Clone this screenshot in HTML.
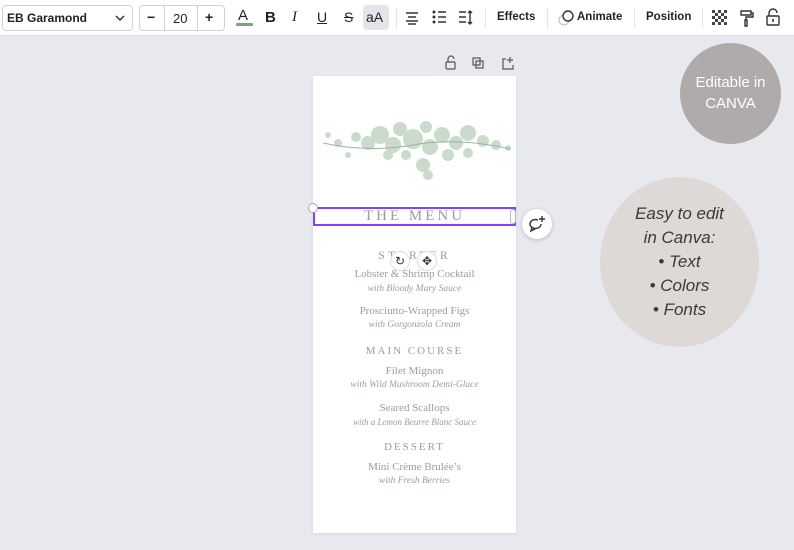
<!DOCTYPE html>
<html><head><meta charset="utf-8"><style>
*{margin:0;padding:0;box-sizing:border-box}
body{width:794px;height:550px;background:#e8e9ee;font-family:"Liberation Sans",sans-serif;position:relative;overflow:hidden}
.tb{position:absolute;left:0;top:0;width:794px;height:36px;background:#fff;border-bottom:1px solid #dcdde2}
.abs{position:absolute}
.box{position:absolute;border:1px solid #cfd1d6;border-radius:4px;background:#fff}
.t{position:absolute;font-size:12px;color:#1f2328;font-weight:bold;top:11px}
.sep{position:absolute;top:8px;width:1px;height:20px;background:#e3e4e8}
.serif{font-family:"Liberation Serif",serif;color:#96a294;text-align:center;position:absolute;left:313px;width:203px}
</style></head><body>
<div class="tb">
 <div class="box" style="left:2px;top:5px;width:131px;height:26px"></div>
 <div class="t" style="left:7px;font-weight:bold;font-size:12px;color:#222">EB Garamond</div>
 <svg class="abs" style="left:115px;top:14px" width="10" height="8"><path d="M1 2l4 4 4-4" stroke="#333" stroke-width="1.5" fill="none"/></svg>
 <div class="box" style="left:139px;top:5px;width:86px;height:26px"></div>
 <div class="abs" style="left:164px;top:5px;width:1px;height:26px;background:#cfd1d6"></div>
 <div class="abs" style="left:197px;top:5px;width:1px;height:26px;background:#cfd1d6"></div>
 <div class="t" style="left:147px;top:9px;font-size:14px">−</div>
 <div class="t" style="left:173px;font-weight:normal;font-size:13px">20</div>
 <div class="t" style="left:205px;top:9px;font-size:14px">+</div>
 <div class="t" style="left:238px;top:7px;font-size:15px;font-weight:normal">A</div>
 <div class="abs" style="left:236px;top:23px;width:17px;height:3px;background:#7aa57c;border-radius:1px"></div>
 <div class="t" style="left:265px;top:9px;font-size:15px">B</div>
 <div class="t" style="left:292px;top:9px;font-size:15px;font-style:italic;font-weight:normal;font-family:'Liberation Serif',serif">I</div>
 <div class="t" style="left:317px;top:9px;font-size:14px;font-weight:normal;text-decoration:underline">U</div>
 <div class="t" style="left:344px;top:9px;font-size:14px;font-weight:normal;text-decoration:line-through">S</div>
 <div class="abs" style="left:363px;top:5px;width:26px;height:25px;background:#e3e5e9;border-radius:4px"></div>
 <div class="t" style="left:366px;top:9px;font-size:14px;font-weight:normal">aA</div>
 <div class="sep" style="left:396px"></div>
 <svg class="abs" style="left:405px;top:11px" width="14" height="14"><path d="M1 2h12M3 6h8M1 10h12M3 13h8" stroke="#333" stroke-width="1.4"/></svg>
 <svg class="abs" style="left:432px;top:10px" width="14" height="14"><g fill="#333"><circle cx="2" cy="2" r="1.5"/><circle cx="2" cy="7" r="1.5"/><circle cx="2" cy="12" r="1.5"/></g><path d="M6 2h8M6 7h8M6 12h8" stroke="#333" stroke-width="1.4"/></svg>
 <svg class="abs" style="left:458px;top:10px" width="16" height="15"><path d="M1 2h7M1 7h7M1 12h7M12 1v13M10 3l2-2 2 2M10 12l2 2 2-2" stroke="#333" stroke-width="1.4" fill="none"/></svg>
 <div class="sep" style="left:485px"></div>
 <div class="t" style="left:497px;font-size:11.5px">Effects</div>
 <div class="sep" style="left:547px"></div>
 <svg class="abs" style="left:557px;top:10px" width="18" height="16"><circle cx="7" cy="10" r="5" fill="none" stroke="#bbb"/><circle cx="11" cy="6" r="5" fill="#fff" stroke="#333" stroke-width="1.4"/></svg>
 <div class="t" style="left:577px;font-size:11.5px">Animate</div>
 <div class="sep" style="left:634px"></div>
 <div class="t" style="left:646px;font-size:11.5px">Position</div>
 <div class="sep" style="left:702px"></div>
 <svg class="abs" style="left:712px;top:10px" width="15" height="15"><g fill="#444"><rect x="0" y="0" width="3" height="3"/><rect x="6" y="0" width="3" height="3"/><rect x="12" y="0" width="3" height="3"/><rect x="3" y="3" width="3" height="3"/><rect x="9" y="3" width="3" height="3"/><rect x="0" y="6" width="3" height="3"/><rect x="6" y="6" width="3" height="3"/><rect x="12" y="6" width="3" height="3"/><rect x="3" y="9" width="3" height="3"/><rect x="9" y="9" width="3" height="3"/><rect x="0" y="12" width="3" height="3"/><rect x="6" y="12" width="3" height="3"/><rect x="12" y="12" width="3" height="3"/></g></svg>
 <svg class="abs" style="left:739px;top:9px" width="15" height="18"><path d="M2 2h10v4H2zM12 4h2v4H7v3M6 11h2v6H6z" stroke="#333" stroke-width="1.4" fill="none"/></svg>
 <svg class="abs" style="left:766px;top:8px" width="14" height="18"><path d="M3 8V5a4 4 0 0 1 8 0" stroke="#333" stroke-width="1.4" fill="none"/><rect x="1" y="8" width="12" height="9" rx="1" stroke="#333" stroke-width="1.4" fill="none"/><path d="M7 11v3" stroke="#333" stroke-width="1.6"/></svg>
</div>

<svg class="abs" style="left:444px;top:55px" width="75" height="16"><g stroke="#555" stroke-width="1.2" fill="none"><path d="M4 7V4a3 3 0 0 1 6 0"/><rect x="2" y="7" width="9" height="7" rx="1"/><rect x="29" y="3" width="7" height="7"/><rect x="32" y="6" width="7" height="7"/><path d="M62 4h-3v10h10v-4M66 2v6M63 5h6"/></g></svg>

<div class="abs" style="left:313px;top:76px;width:203px;height:457px;background:#fff;box-shadow:0 1px 3px rgba(0,0,0,.08)"></div>
<svg class="abs" style="left:318px;top:105px" width="196" height="80">
<g fill="#b5ccb7" opacity=".7">
<circle cx="38" cy="32" r="5"/><circle cx="50" cy="38" r="7"/><circle cx="62" cy="30" r="9"/><circle cx="75" cy="40" r="8"/>
<circle cx="82" cy="24" r="7"/><circle cx="95" cy="34" r="10"/><circle cx="108" cy="22" r="6"/><circle cx="112" cy="42" r="8"/>
<circle cx="124" cy="30" r="8"/><circle cx="138" cy="38" r="7"/><circle cx="150" cy="28" r="8"/><circle cx="165" cy="36" r="6"/>
<circle cx="178" cy="40" r="5"/><circle cx="190" cy="43" r="3"/><circle cx="10" cy="30" r="3"/><circle cx="20" cy="38" r="4"/>
<circle cx="70" cy="50" r="5"/><circle cx="88" cy="50" r="5"/><circle cx="130" cy="50" r="6"/><circle cx="150" cy="48" r="5"/>
<circle cx="105" cy="60" r="7"/><circle cx="110" cy="70" r="5"/><circle cx="30" cy="50" r="3"/>
</g>
<path d="M5 38 Q50 48 95 40 T192 44" stroke="#9ab59d" fill="none"/>
</svg>

<div class="abs" style="left:313px;top:207px;width:203px;height:19px;border:2px solid #8b3dff"></div>
<div class="abs" style="left:308px;top:203px;width:10px;height:10px;border-radius:50%;background:#fff;border:1px solid #aaa"></div>
<div class="abs" style="left:510px;top:209px;width:6px;height:15px;background:#fff;border:1px solid #bbb;border-radius:3px"></div>
<div class="serif" style="top:208px;font-size:15px;letter-spacing:3px">THE MENU</div>
<div class="abs" style="left:522px;top:209px;width:30px;height:30px;border-radius:50%;background:#fff;box-shadow:0 1px 4px rgba(0,0,0,.2)"></div>
<svg class="abs" style="left:528px;top:215px" width="18" height="18"><path d="M13 9a5.5 4.5 0 1 1-3-4M4 12l-1 4 4-2" stroke="#333" stroke-width="1.4" fill="none"/><path d="M14 1v6M11 4h6" stroke="#333" stroke-width="1.4"/></svg>

<div class="serif" style="top:248px;font-size:12px;letter-spacing:3px">STARTER</div>
<div class="abs" style="left:390px;top:251px;width:20px;height:20px;border-radius:50%;background:#fff;border:1px solid #ddd;font-size:12px;text-align:center;line-height:18px;color:#333">↻</div>
<div class="abs" style="left:417px;top:251px;width:20px;height:20px;border-radius:50%;background:#fff;border:1px solid #ddd;font-size:12px;text-align:center;line-height:18px;color:#333">✥</div>
<div class="serif" style="top:268px;font-size:11px">Lobster &amp; Shrimp Cocktail</div>
<div class="serif" style="top:284px;font-size:9.5px;font-style:italic">with Bloody Mary Sauce</div>
<div class="serif" style="top:305px;font-size:11px">Prosciutto-Wrapped Figs</div>
<div class="serif" style="top:320px;font-size:9.5px;font-style:italic">with Gorgonzola Cream</div>
<div class="serif" style="top:345px;font-size:11px;letter-spacing:2px">MAIN COURSE</div>
<div class="serif" style="top:365px;font-size:11px">Filet Mignon</div>
<div class="serif" style="top:380px;font-size:9.5px;font-style:italic">with Wild Mushroom Demi-Glace</div>
<div class="serif" style="top:402px;font-size:11px">Seared Scallops</div>
<div class="serif" style="top:417px;font-size:9px;font-style:italic">with a Lemon Beurre Blanc Sauce</div>
<div class="serif" style="top:441px;font-size:11px;letter-spacing:2px">DESSERT</div>
<div class="serif" style="top:461px;font-size:11px">Mini Crème Brulée’s</div>
<div class="serif" style="top:476px;font-size:9.5px;font-style:italic">with Fresh Berries</div>

<div class="abs" style="left:680px;top:43px;width:101px;height:101px;border-radius:50%;background:#b0aaaa;color:#fff;text-align:center;font-size:15px;line-height:21px;padding-top:29px">Editable in<br>CANVA</div>
<div class="abs" style="left:600px;top:177px;width:159px;height:170px;border-radius:50%;background:#ded9d6;color:#3a3a3a;text-align:center;font-size:17px;font-style:italic;line-height:24px;padding-top:25px">Easy to edit<br>in Canva:<br>• Text<br>• Colors<br>• Fonts</div>
</body></html>
